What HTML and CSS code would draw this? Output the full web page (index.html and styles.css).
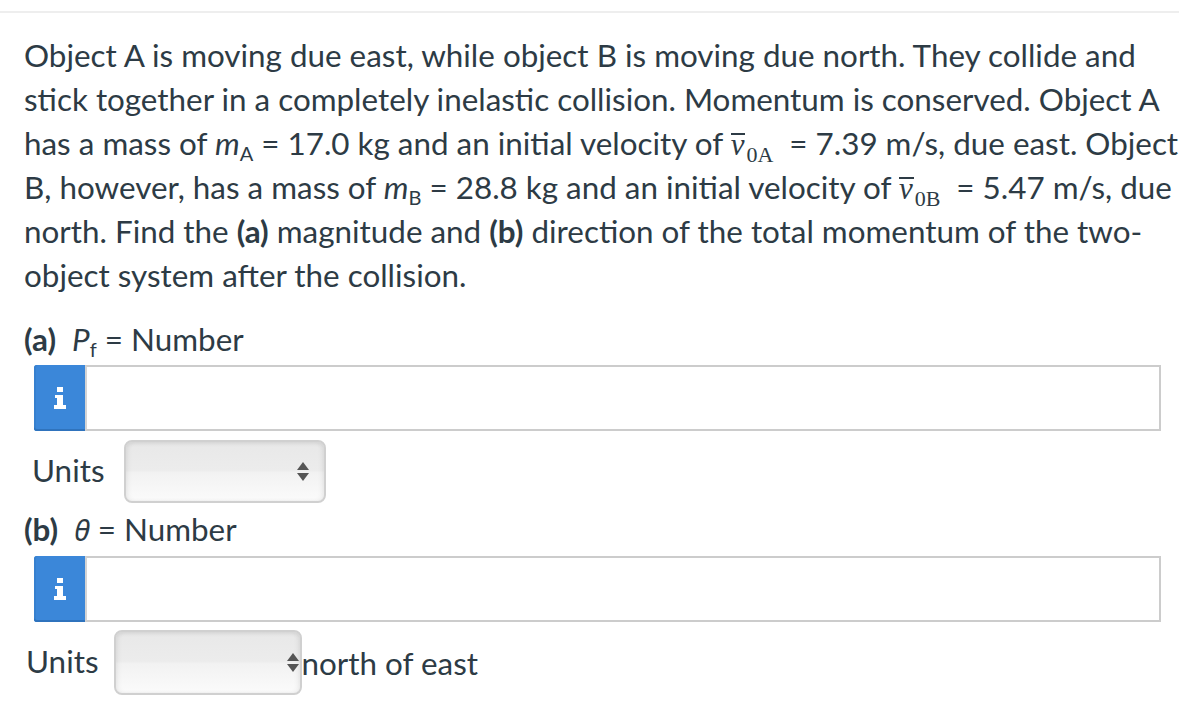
FILE: index.html
```html
<!DOCTYPE html>
<html>
<head>
<meta charset="utf-8">
<link rel="stylesheet" href="styles.css">
</head>
<body>
<div class="topline"></div>
<div class="content">
  <p class="question">Object A is moving due east, while object B is moving due north. They collide and stick together in a completely inelastic collision. Momentum is conserved. Object A has a mass of <i class="mv">m</i><sub class="sb">A</sub> = 17.0 kg and an initial velocity of <span class="vec"><i class="v">v</i><sub class="vs">0A</sub></span> = 7.39 m/s, due east. Object B, however, has a mass of <i class="mv">m</i><sub class="sb">B</sub> = 28.8 kg and an initial velocity of <span class="vec"><i class="v">v</i><sub class="vs">0B</sub></span> = 5.47 m/s, due north. Find the <b>(a)</b> magnitude and <b>(b)</b> direction of the total momentum of the two-object system after the collision.</p>

  <div class="part">
    <div class="label"><b>(a)</b> <i class="mv">P</i><sub class="sb">f</sub> = Number</div>
    <div class="answer">
      <span class="info"><svg width="12" height="22" viewBox="0 0 12 22"><rect x="3" y="0" width="6" height="5" fill="#fff"/><rect x="1" y="8" width="8" height="3" fill="#fff"/><rect x="3" y="8" width="6" height="12" fill="#fff"/><rect x="0" y="18" width="12" height="4" fill="#fff"/></svg></span>
      <span class="field"></span>
    </div>
    <div class="units units-a">
      <span class="units-label">Units</span>
      <span class="select select-a"><span class="arrows"><span class="up"></span><span class="down"></span></span></span>
    </div>
  </div>

  <div class="part part-b">
    <div class="label"><b>(b)</b> <i class="theta">θ</i> = Number</div>
    <div class="answer">
      <span class="info"><svg width="12" height="22" viewBox="0 0 12 22"><rect x="3" y="0" width="6" height="5" fill="#fff"/><rect x="1" y="8" width="8" height="3" fill="#fff"/><rect x="3" y="8" width="6" height="12" fill="#fff"/><rect x="0" y="18" width="12" height="4" fill="#fff"/></svg></span>
      <span class="field"></span>
    </div>
    <div class="units units-b">
      <span class="units-label">Units</span>
      <span class="select select-b"><span class="arrows"><span class="up"></span><span class="down"></span></span></span>
      <span class="after">north of east</span>
    </div>
  </div>
</div>
</body>
</html>
```

FILE: styles.css
```css
html, body {
  margin: 0;
  padding: 0;
  background: #ffffff;
}
body {
  font-family: "Lato", "Liberation Sans", sans-serif;
  color: #2d3b45;
  font-size: 31.4px;
  line-height: 44px;
}
.topline {
  margin-top: 11px;
  height: 2px;
  background: #eeeeee;
}
.content {
  padding: 20px 0 0 24px;
}
.question {
  margin: 0;
}
.mv {
  font-style: italic;
}
.theta {
  font-family: "Noto Sans", "DejaVu Sans", sans-serif;
  font-style: italic;
  font-size: 29px;
}
.sb {
  font-size: 20px;
  vertical-align: -6px;
  line-height: 0;
}
.vec {
  font-family: "Liberation Serif", serif;
  margin-right: 8px;
  line-height: 0;
}
.v {
  display: inline-block;
  font-size: 31px;
  line-height: 20px;
  border-top: 2px solid #2d3b45;
  padding: 0 1px 0 0;
  margin-right: 1px;
}
.vs {
  font-size: 22px;
  vertical-align: -7px;
  line-height: 0;
  font-style: normal;
}
.part {
  margin-top: 20px;
}
.part-b {
  margin-top: 4px;
}
.label b {
  margin-right: 8px;
}
.answer {
  display: flex;
  height: 66px;
  margin: 4px 18px 0 10px;
}
.info {
  width: 51px;
  flex: none;
  background: #3b87d9;
  border-radius: 3px 0 0 3px;
  box-shadow: inset 0 -2px 0 #2f73bd, inset 2px 0 0 #3680cf;
  display: flex;
  align-items: center;
  justify-content: center;
}
.info svg {
  display: block;
  margin-left: 1px;
}
.field {
  flex: 1;
  border: 2px solid #cccccc;
  border-left: 2px solid #d4d4d4;
  background: #ffffff;
}
.units {
  display: flex;
  align-items: center;
  margin-top: 9px;
}
.units-label {
  margin-top: -3px;
}
.units-a {
  margin-left: 8px;
}
.units-b {
  margin-left: 2px;
  margin-top: 8px;
}
.select {
  height: 63px;
  box-sizing: border-box;
  border: 2px solid #d0d0d0;
  border-radius: 8px;
  background: linear-gradient(#e8e8e8 0%, #ececec 48%, #f2f2f2 52%, #fbfbfb 100%);
  box-shadow: inset 0 2px 4px rgba(0,0,0,0.05), inset 3px 0 4px rgba(0,0,0,0.04), inset -3px 0 4px rgba(0,0,0,0.04);
  display: flex;
  align-items: center;
  justify-content: flex-end;
}
.select-a {
  width: 202px;
  margin-left: 19px;
  padding-right: 15px;
}
.select-b {
  width: 188px;
  height: 65px;
  margin-left: 15px;
  padding-right: 1px;
}
.arrows {
  display: flex;
  flex-direction: column;
  gap: 3px;
}
.up {
  width: 0;
  height: 0;
  border-left: 6px solid transparent;
  border-right: 6px solid transparent;
  border-bottom: 8px solid #555555;
}
.down {
  width: 0;
  height: 0;
  border-left: 6px solid transparent;
  border-right: 6px solid transparent;
  border-top: 8px solid #555555;
}
```
